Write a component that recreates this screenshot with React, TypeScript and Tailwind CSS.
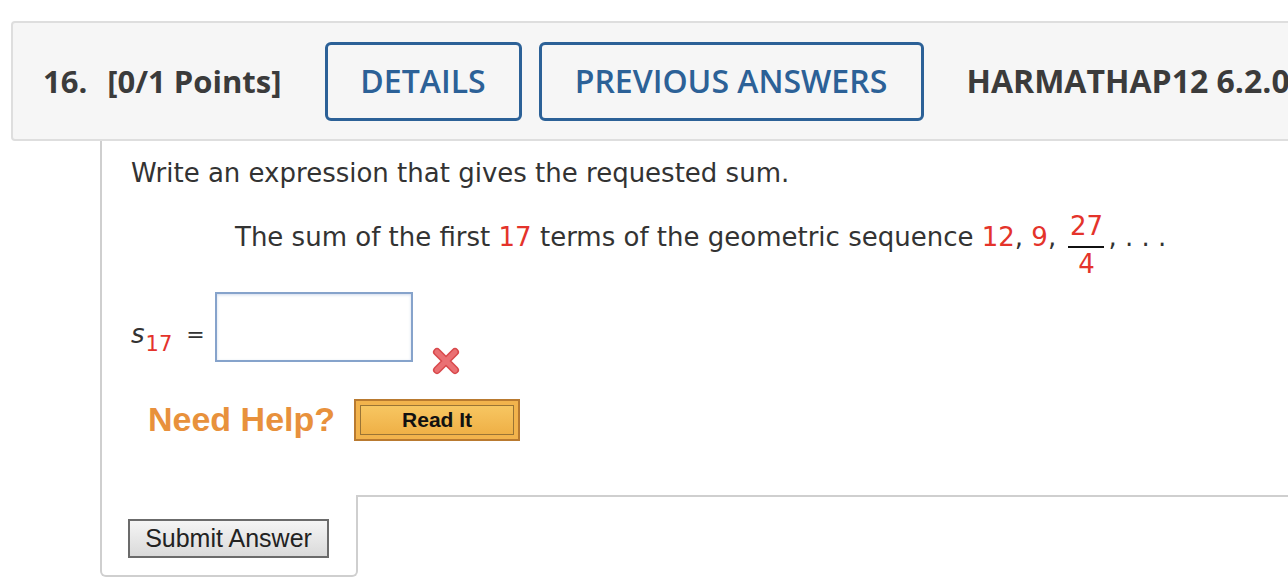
import React from 'react'

const verdana = { fontFamily: '"DejaVu Sans", Verdana, sans-serif' }
const arial = { fontFamily: '"Liberation Sans", Arial, sans-serif' }
const openSans = { fontFamily: '"Open Sans", sans-serif' }

function WrongMark() {
  return (
    <svg width="28" height="28" viewBox="0 0 28 28">
      <g strokeLinecap="round">
        <path d="M5 5 L23 23 M23 5 L5 23" stroke="#d8494c" strokeWidth="8" />
        <path d="M5 5 L23 23 M23 5 L5 23" stroke="#ea7073" strokeWidth="5" />
      </g>
    </svg>
  )
}

function Fraction({ top, bottom }: { top: string; bottom: string }) {
  return (
    <span className="inline-flex flex-col items-center align-middle mx-[4px] relative top-[7px]">
      <span className="text-[#e4332b] leading-[26px]">{top}</span>
      <span className="block w-[36px] h-[2px] bg-[#111] mt-[7px] mb-[3px]" />
      <span className="text-[#e4332b] leading-[26px]">{bottom}</span>
    </span>
  )
}

export default function App() {
  return (
    <div className="w-[1288px] h-[582px] overflow-hidden bg-white pt-[21px]">
      {/* question header */}
      <div
        className="ml-[11px] w-[1320px] h-[120px] flex items-center bg-[#f6f6f6] border-2 border-[#dedede] rounded pl-[30px] text-[#3b3b3b]"
        style={openSans}
      >
        <span className="text-[31px] font-bold whitespace-nowrap">16.</span>
        <span className="text-[31px] font-bold whitespace-nowrap ml-[20px]">[0/1 Points]</span>
        <button className="ml-[43px] w-[197px] h-[79px] border-[3px] border-[#2c6197] rounded-md text-[#2c6197] text-[32px] font-semibold">
          DETAILS
        </button>
        <button className="ml-[17px] w-[385px] h-[79px] border-[3px] border-[#2c6197] rounded-md text-[#2c6197] text-[32px] font-semibold">
          PREVIOUS ANSWERS
        </button>
        <span className="ml-[43px] text-[32px] font-bold whitespace-nowrap">HARMATHAP12 6.2.0</span>
      </div>

      {/* question body */}
      <div className="ml-[100px]">
        <div className="border-l-2 border-[#cfcfcf] h-[354px] pl-[29px] pt-[16px] text-[#333]" style={verdana}>
          <p className="text-[26px] leading-[32px]">Write an expression that gives the requested sum.</p>

          <p className="text-[26px] leading-[32px] mt-[17px] pl-[104px] whitespace-nowrap">
            The sum of the first <span className="text-[#e4332b]">17</span> terms of the geometric sequence{' '}
            <span className="text-[#e4332b]">12</span>, <span className="text-[#e4332b]">9</span>,{' '}
            <Fraction top="27" bottom="4" />, . . .
          </p>

          <div className="flex items-start mt-[22px]">
            <div className="flex items-start mt-[30px] whitespace-nowrap">
              <span className="italic text-[26px] leading-[24px]">s</span>
              <span className="text-[#e4332b] text-[21px] leading-[20px] mt-[12px] ml-[1px]">17</span>
              <span className="text-[22px] leading-[22px] ml-[14px] mt-[2px]">=</span>
            </div>
            <input
              className="ml-[10px] w-[198px] h-[70px] border-2 border-[#86a3cb] bg-white shadow-[inset_0_1px_3px_rgba(120,150,200,0.35)] outline-none"
              type="text"
            />
            <div className="ml-[19px] mt-[55px]">
              <WrongMark />
            </div>
          </div>

          <div className="flex items-center mt-[19px] pl-[17px]" style={arial}>
            <span className="text-[34px] font-bold text-[#e8913c]">Need Help?</span>
            <div className="ml-[19px] w-[166px] h-[42px] border-2 border-[#b97a30] bg-[#f2b34c] p-[4px]">
              <div className="h-full border border-[#9a7435] bg-gradient-to-b from-[#f7c661] to-[#efb046] flex items-center justify-center text-[21px] font-bold text-[#111]">
                Read It
              </div>
            </div>
          </div>
        </div>

        <div className="flex">
          <div className="w-[258px] h-[82px] border-2 border-t-0 border-[#cfcfcf] rounded-b-md pl-[26px] pt-[24px]">
            <button
              className="w-[201px] h-[39px] border-2 border-[#6b6b6b] bg-gradient-to-b from-[#f5f5f5] to-[#dadada] text-[25px] leading-[35px] text-[#222]"
              style={arial}
            >
              Submit Answer
            </button>
          </div>
          <div className="flex-1 border-t-2 border-[#cfcfcf]" />
        </div>
      </div>
    </div>
  )
}
